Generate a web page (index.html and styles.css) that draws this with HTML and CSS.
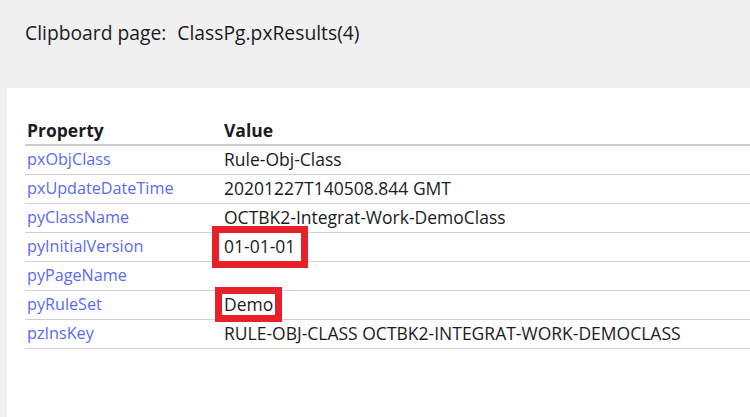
FILE: index.html
```html
<!DOCTYPE html>
<html>
<head>
<meta charset="utf-8">
<link rel="stylesheet" href="styles.css">
</head>
<body>
<div class="page">
  <header class="head">
    <h1 class="title">Clipboard page:<span class="page-name">ClassPg.pxResults(4)</span></h1>
  </header>
  <section class="panel">
    <table class="props">
      <thead>
        <tr><th class="c1">Property</th><th>Value</th></tr>
      </thead>
      <tbody>
        <tr><td class="c1"><a href="#">pxObjClass</a></td><td>Rule-Obj-Class</td></tr>
        <tr><td class="c1"><a href="#">pxUpdateDateTime</a></td><td>20201227T140508.844 GMT</td></tr>
        <tr><td class="c1"><a href="#">pyClassName</a></td><td>OCTBK2-Integrat-Work-DemoClass</td></tr>
        <tr><td class="c1"><a href="#">pyInitialVersion</a></td><td><span class="mark mark-a">01-01-01</span></td></tr>
        <tr><td class="c1"><a href="#">pyPageName</a></td><td></td></tr>
        <tr><td class="c1"><a href="#">pyRuleSet</a></td><td><span class="mark mark-b">Demo</span></td></tr>
        <tr><td class="c1"><a href="#">pzInsKey</a></td><td>RULE-OBJ-CLASS OCTBK2-INTEGRAT-WORK-DEMOCLASS</td></tr>
      </tbody>
    </table>
  </section>
</div>
</body>
</html>
```

FILE: styles.css
```css
html, body {
  margin: 0;
  padding: 0;
  height: 100%;
}
body {
  background: #f0f0f0;
  font-family: "Open Sans", "Noto Sans", sans-serif;
  color: #1b1b24;
  overflow: hidden;
}
.page {
  display: flex;
  flex-direction: column;
  height: 100%;
}
.head {
  height: 88px;
  padding-left: 25px;
  box-sizing: border-box;
}
.title {
  margin: 0;
  padding-top: 19px;
  font-size: 19.3px;
  font-weight: 400;
  line-height: 28px;
}
.page-name {
  margin-left: 11px;
}
.panel {
  flex: 1;
  margin-left: 7px;
  background: #fff;
  padding: 32px 0 0 18px;
}
.props {
  width: 100%;
  border-collapse: collapse;
  font-size: 17.5px;
  line-height: 20px;
}
.props th {
  text-align: left;
  font-weight: 700;
  padding: 0 0 4px 2px;
  border-bottom: 2px solid #cccccc;
}
.props td {
  height: 20px;
  padding: 3px 0 5px 2px;
  border-bottom: 1px solid #d0d0d0;
  white-space: nowrap;
}
.props .c1 {
  width: 195px;
}
.props td.c1 {
  font-size: 16.2px;
}
.props a {
  color: #5b69f7;
  text-decoration: none;
}
.mark {
  position: relative;
  display: inline-block;
}
.mark::after {
  content: "";
  position: absolute;
  border: 7px solid #e8202a;
}
.mark-a::after {
  left: -12px;
  right: -13px;
  top: -10px;
  bottom: -12px;
}
.mark-b::after {
  left: -9px;
  right: -9px;
  top: -7px;
  bottom: -8px;
}
```
